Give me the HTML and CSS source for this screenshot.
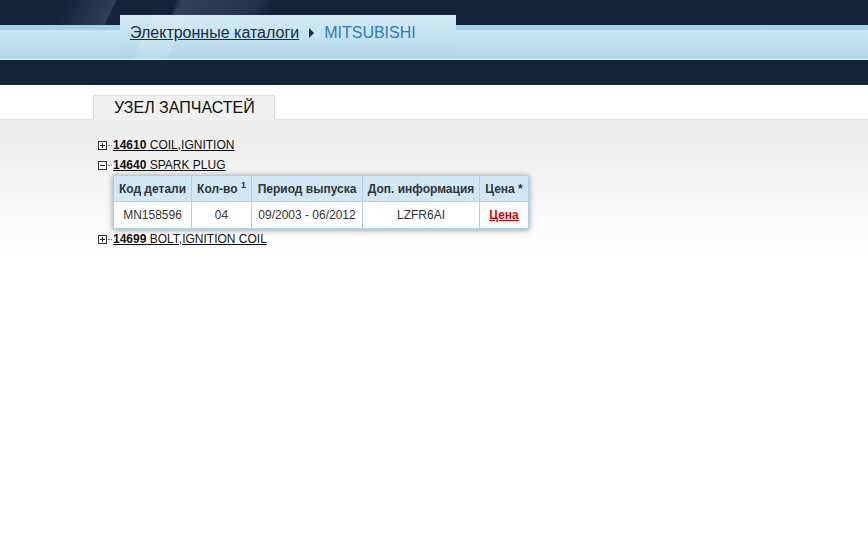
FILE: index.html
```html
<!DOCTYPE html>
<html lang="ru">
<head>
<meta charset="utf-8">
<title>MITSUBISHI</title>
<link rel="stylesheet" href="styles.css">
</head>
<body>
<div class="header">
  <div class="crumbs">
    <a class="crumb-link" href="#">Электронные каталоги</a>
    <span class="crumb-arrow"></span>
    <span class="crumb-current">MITSUBISHI</span>
  </div>
</div>
<div class="tabs">
  <div class="tab">УЗЕЛ ЗАПЧАСТЕЙ</div>
</div>
<div class="content">
  <ul class="tree">
    <li class="node">
      <span class="toggle plus"></span><span class="dots"></span><a class="node-link" href="#"><b>14610</b> COIL,IGNITION</a>
    </li>
    <li class="node open">
      <span class="toggle minus"></span><span class="dots"></span><a class="node-link" href="#"><b>14640</b> SPARK PLUG</a>
      <table class="parts">
        <colgroup>
          <col class="c1"><col class="c2"><col class="c3"><col class="c4"><col class="c5">
        </colgroup>
        <thead>
          <tr>
            <th>Код детали</th>
            <th>Кол-во <sup>1</sup></th>
            <th>Период выпуска</th>
            <th>Доп. информация</th>
            <th>Цена *</th>
          </tr>
        </thead>
        <tbody>
          <tr>
            <td>MN158596</td>
            <td>04</td>
            <td>09/2003 - 06/2012</td>
            <td>LZFR6AI</td>
            <td><a class="price" href="#">Цена</a></td>
          </tr>
        </tbody>
      </table>
    </li>
    <li class="node">
      <span class="toggle plus"></span><span class="dots"></span><a class="node-link" href="#"><b>14699</b> BOLT,IGNITION COIL</a>
    </li>
  </ul>
</div>
</body>
</html>
```
FILE: styles.css
```css
html, body {
  margin: 0;
  padding: 0;
  background: #fff;
  font-family: "Liberation Sans", Arial, sans-serif;
  color: #111;
}

.header {
  height: 85px;
  padding-top: 15px;
  box-sizing: border-box;
  background: linear-gradient(to bottom,
      #12233a 0, #12233a 25px,
      #9dd2ee 25px, #9dd2ee 30px,
      #cbe6f4 30px, #b0d7ea 59px,
      #eaf5fb 59px, #eaf5fb 60px,
      #12233a 60px, #12233a 85px);
  position: relative;
  overflow: hidden;
}

.header::before {
  content: "";
  display: block;
  position: absolute;
  left: 0;
  top: 0;
  width: 868px;
  height: 25px;
  background:
    linear-gradient(115deg, transparent 0 60px, rgba(120,140,165,0.22) 95px, rgba(120,140,165,0.28) 105px, transparent 106px),
    linear-gradient(115deg, transparent 0 160px, rgba(120,140,165,0.3) 165px, rgba(120,140,165,0.15) 235px, transparent 250px);
}

.crumbs {
  position: relative;
  margin-left: 120px;
  width: 336px;
  height: 44px;
  box-sizing: border-box;
  padding: 0 0 8px 10px;
  background:
    linear-gradient(115deg, transparent 0 30px, rgba(255,255,255,0.12) 31px, rgba(255,255,255,0.12) 60px, transparent 61px),
    linear-gradient(to bottom, #d2eaf6 0, #c6e3f2 20px, #afd6e9 44px);
  font-size: 16px;
  line-height: 20px;
  display: flex;
  align-items: center;
}

.crumb-link {
  color: #1b2b3c;
  text-decoration: underline;
}

.crumb-arrow {
  display: inline-block;
  width: 0;
  height: 0;
  border-top: 5px solid transparent;
  border-bottom: 5px solid transparent;
  border-left: 5px solid #1b2b3c;
  margin: 0 10px 0 10px;
}

.crumb-current {
  color: #2b7db3;
}

.tabs {
  height: 35px;
  box-sizing: border-box;
  padding: 10px 0 0 93px;
  border-bottom: 1px solid #dcdcdc;
  background: #fff;
}

.tab {
  width: 182px;
  height: 25px;
  box-sizing: border-box;
  border: 1px solid #dcdcdc;
  border-bottom: none;
  background: #f0f0f0;
  font-size: 16px;
  line-height: 24px;
  padding-left: 20px;
  color: #111;
  margin-bottom: -1px;
  position: relative;
}

.content {
  background: linear-gradient(to bottom, #ebebeb 0, #f6f6f6 70px, #fff 135px);
  min-height: 414px;
  padding-top: 15px;
}

.tree {
  list-style: none;
  margin: 0;
  padding: 0 0 0 98px;
  font-size: 12px;
}

.node {
  line-height: 20px;
}

.toggle {
  display: inline-block;
  width: 9px;
  height: 9px;
  box-sizing: border-box;
  border: 1px solid #333;
  background: #fff;
  vertical-align: -1px;
  position: relative;
}

.toggle::before {
  content: "";
  position: absolute;
  left: 1px;
  top: 3px;
  width: 5px;
  height: 1px;
  background: #222;
}

.plus::after {
  content: "";
  position: absolute;
  left: 3px;
  top: 1px;
  width: 1px;
  height: 5px;
  background: #222;
}

.dots {
  display: inline-block;
  width: 4px;
  border-bottom: 1px dotted #777;
  vertical-align: 3px;
  margin: 0 1px 0 1px;
}

.node-link {
  color: #111;
  text-decoration: underline;
}

.parts {
  margin: 0 0 0 15px;
  border-collapse: collapse;
  table-layout: fixed;
  width: 415px;
  border: 1px solid #a8d3ea;
  box-shadow: 0 1px 6px rgba(0, 0, 0, 0.4);
  background: #fff;
  font-size: 12px;
  line-height: 14px;
  color: #333;
}

.parts .c1 { width: 78px; }
.parts .c2 { width: 60px; }
.parts .c3 { width: 111px; }
.parts .c4 { width: 117px; }
.parts .c5 { width: 49px; }

.parts th {
  background: #cfe7f6;
  font-weight: bold;
  height: 25px;
  padding: 0;
  border: 1px solid #a8d3ea;
  white-space: nowrap;
  text-align: center;
}

.parts th sup {
  font-size: 9px;
  vertical-align: 5px;
  line-height: 0;
}

.parts td {
  height: 26px;
  padding: 0;
  border: 1px solid #a8d3ea;
  text-align: center;
  white-space: nowrap;
}

.price {
  color: #e00000;
  font-weight: bold;
  text-decoration: underline;
}
```
